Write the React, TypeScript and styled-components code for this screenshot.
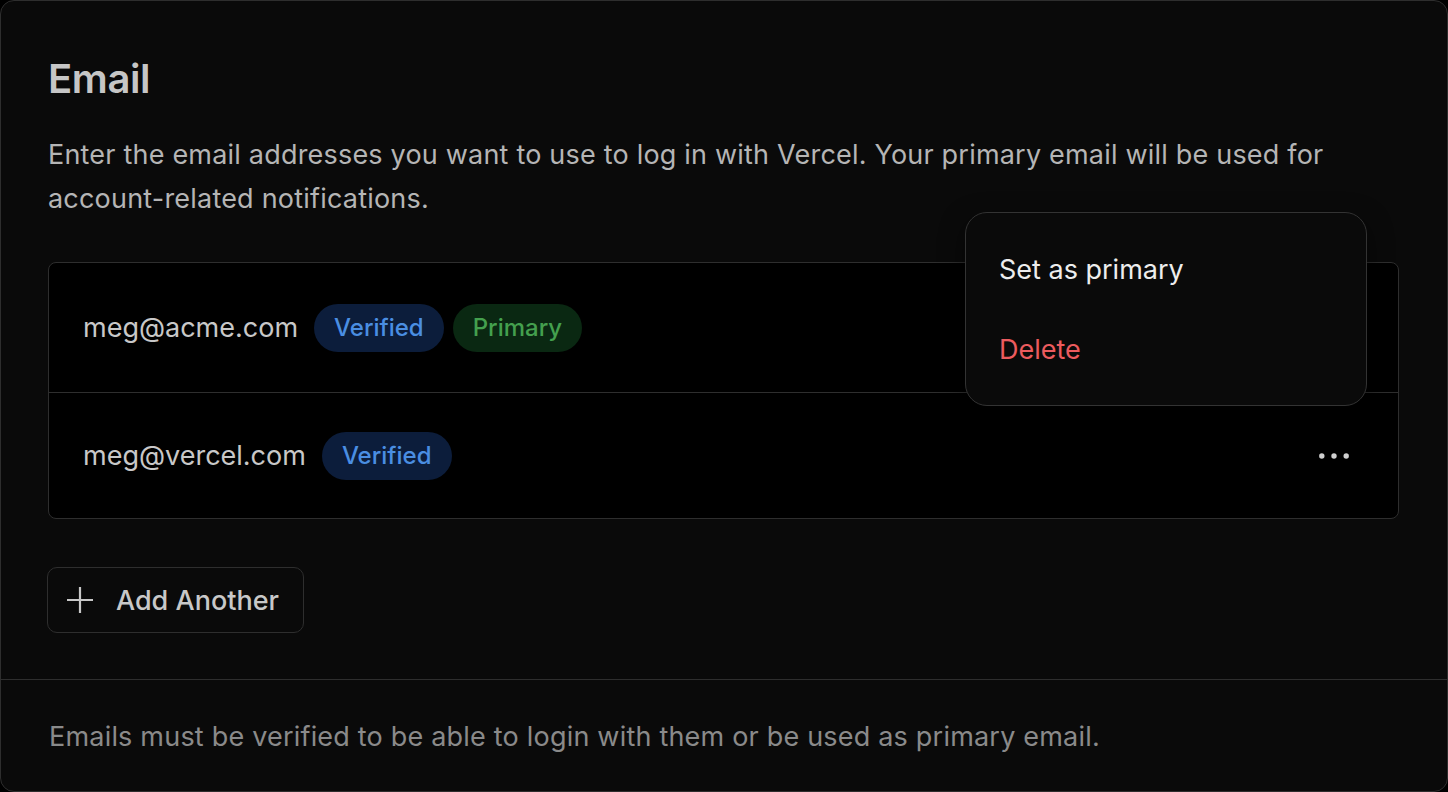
import React from "react";
import styled, { createGlobalStyle } from "styled-components";

const GlobalStyle = createGlobalStyle`
  html, body {
    margin: 0;
    padding: 0;
    background: #000;
  }
  * {
    box-sizing: border-box;
  }
  body {
    font-family: Inter, "Noto Sans", sans-serif;
    -webkit-font-smoothing: antialiased;
  }
`;

const Card = styled.section`
  width: 1448px;
  height: 792px;
  display: flex;
  flex-direction: column;
  background: #0a0a0a;
  border: 1px solid #2e2e2e;
  border-radius: 14px;
  overflow: hidden;
`;

const Content = styled.div`
  flex: 1;
  display: flex;
  flex-direction: column;
  padding: 55px 48px 0 47px;
`;

const Title = styled.h2`
  margin: 0;
  font-size: 40px;
  line-height: 46px;
  font-weight: 600;
  color: #c6c6c6;
  letter-spacing: -0.4px;
`;

const Description = styled.p`
  margin: 31px 0 0;
  max-width: 1340px;
  font-size: 27px;
  line-height: 44px;
  letter-spacing: 0.2px;
  color: #b5b5b5;
`;

const Wrapper = styled.div`
  position: relative;
  margin-top: 41px;
`;

const List = styled.div`
  background: #000;
  border: 1px solid #2e2e2e;
  border-radius: 8px;
`;

const Row = styled.div<{ $height: number; $last?: boolean }>`
  height: ${(p) => p.$height}px;
  display: flex;
  align-items: center;
  padding: 0 48px 0 34px;
  border-bottom: ${(p) => (p.$last ? "none" : "1px solid #2e2e2e")};
`;

const Address = styled.span`
  font-size: 27px;
  color: #c8c8c8;
  margin-right: 16px;
`;

const Badges = styled.div`
  display: flex;
  gap: 9px;
`;

const Badge = styled.span<{ $tone: "blue" | "green" }>`
  display: inline-flex;
  align-items: center;
  height: 48px;
  padding: 0 20px;
  border-radius: 24px;
  font-size: 24px;
  font-weight: 500;
  background: ${(p) => (p.$tone === "blue" ? "#0c1d3b" : "#0a2812")};
  color: ${(p) => (p.$tone === "blue" ? "#4a8ee2" : "#44a04e")};
`;

const MoreButton = styled.button`
  margin-left: auto;
  width: 32px;
  height: 32px;
  display: flex;
  align-items: center;
  justify-content: center;
  background: none;
  border: none;
  padding: 0;
  color: #cfcfcf;
  cursor: pointer;
`;

const Menu = styled.div`
  position: absolute;
  top: -50px;
  right: 32px;
  width: 402px;
  padding: 16px 0;
  background: #0a0a0a;
  border: 1px solid #333;
  border-radius: 22px;
  box-shadow: 0 8px 24px rgba(0, 0, 0, 0.5);
`;

const MenuItem = styled.div<{ $danger?: boolean }>`
  height: 80px;
  display: flex;
  align-items: center;
  padding: 0 33px;
  font-size: 27px;
  color: ${(p) => (p.$danger ? "#ec5b5e" : "#ededed")};
  cursor: pointer;
`;

const AddButton = styled.button`
  align-self: flex-start;
  margin-top: 48px;
  margin-left: -1px;
  height: 66px;
  display: flex;
  align-items: center;
  gap: 22px;
  padding: 0 24px 0 18px;
  background: #0a0a0a;
  border: 1px solid #2e2e2e;
  border-radius: 10px;
  font-family: Inter, "Noto Sans", sans-serif;
  font-size: 27px;
  font-weight: 500;
  color: #c8c8c8;
  cursor: pointer;
`;

const Footer = styled.footer`
  height: 112px;
  display: flex;
  align-items: center;
  padding: 2px 48px 0;
  border-top: 1px solid #2e2e2e;
  font-size: 27px;
  letter-spacing: 0.2px;
  color: #8a8a8a;
`;

function Dots() {
  return (
    <svg width="30" height="8" viewBox="0 0 30 8" fill="currentColor">
      <circle cx="2.8" cy="4" r="2.7" />
      <circle cx="15" cy="4" r="2.7" />
      <circle cx="27.2" cy="4" r="2.7" />
    </svg>
  );
}

function Plus() {
  return (
    <svg width="28" height="28" viewBox="0 0 28 28" fill="none" stroke="currentColor" strokeWidth="2.2">
      <path d="M14 1v26M1 14h26" />
    </svg>
  );
}

export default function App() {
  return (
    <>
      <GlobalStyle />
      <Card>
        <Content>
          <Title>Email</Title>
          <Description>
            Enter the email addresses you want to use to log in with Vercel. Your primary email will be used for
            account-related notifications.
          </Description>
          <Wrapper>
            <List>
              <Row $height={130}>
                <Address>meg@acme.com</Address>
                <Badges>
                  <Badge $tone="blue">Verified</Badge>
                  <Badge $tone="green">Primary</Badge>
                </Badges>
              </Row>
              <Row $height={125} $last>
                <Address>meg@vercel.com</Address>
                <Badges>
                  <Badge $tone="blue">Verified</Badge>
                </Badges>
                <MoreButton aria-label="More">
                  <Dots />
                </MoreButton>
              </Row>
            </List>
            <Menu>
              <MenuItem>Set as primary</MenuItem>
              <MenuItem $danger>Delete</MenuItem>
            </Menu>
          </Wrapper>
          <AddButton>
            <Plus />
            Add Another
          </AddButton>
        </Content>
        <Footer>Emails must be verified to be able to login with them or be used as primary email.</Footer>
      </Card>
    </>
  );
}
